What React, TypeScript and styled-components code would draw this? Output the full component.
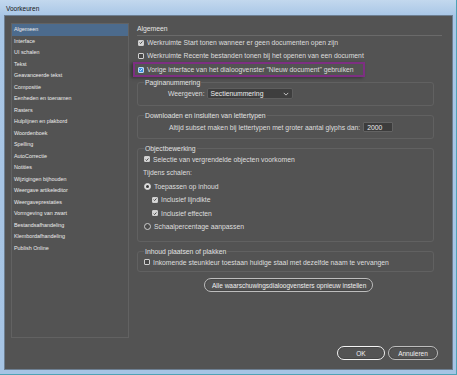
import React from "react";
import styled, { createGlobalStyle, css } from "styled-components";

const GlobalStyle = createGlobalStyle`
  html, body {
    margin: 0;
    padding: 0;
    background: #a9c7e7;
  }
  * {
    box-sizing: border-box;
  }
`;

const Window = styled.div`
  width: 457px;
  height: 375px;
  display: flex;
  flex-direction: column;
  background: linear-gradient(180deg, #c3d8ee 0px, #a8c6e6 16px, #a6c4e4 100%);
  border-right: 1px solid #4fa2b6;
  border-bottom: 1px solid #4fa2b6;
  font-family: "Liberation Sans", Arial, sans-serif;
`;

const TitleBar = styled.div`
  height: 16px;
  flex: none;
  display: flex;
  align-items: center;
  padding: 1px 0 0 6px;
  font-size: 6.5px;
  color: #151515;
`;

const Client = styled.div`
  flex: 1;
  margin: 0 4px 5px 5px;
  background: #535353;
  box-shadow: 0 0 0 1px #6d7f92;
  display: flex;
  flex-direction: column;
  padding: 7px 10px 9px 6px;
  color: #dedede;
`;

const Body = styled.div`
  height: 315px;
  display: flex;
  gap: 8px;
`;

const Sidebar = styled.ul`
  width: 118px;
  flex: none;
  margin: 0;
  padding: 0;
  list-style: none;
  border: 1px solid #626262;
  font-size: 5.4px;
`;

const NavItem = styled.li<{ $active?: boolean }>`
  height: 11.53px;
  line-height: 11.53px;
  padding-left: 2px;
  color: #ececec;
  white-space: nowrap;
  ${(p) =>
    p.$active &&
    css`
      background: #4c6b8d;
      height: 11.5px;
    `}
`;

const Main = styled.div`
  flex: 1;
  display: flex;
  flex-direction: column;
  font-size: 6.8px;
`;

const SectionTitle = styled.div`
  height: 13px;
  line-height: 12px;
  border-bottom: 1px solid #6a6a6a;
  color: #e4e4e4;
`;

const CheckRow = styled.div<{ $indent?: number; $highlight?: boolean }>`
  height: 13px;
  display: flex;
  align-items: center;
  gap: 3px;
  padding-left: ${(p) => 1 + (p.$indent ?? 0)}px;
  white-space: nowrap;
  ${(p) =>
    p.$highlight &&
    css`
      height: 15px;
      width: fit-content;
      margin-left: -4px;
      padding: 0 9px 0 3px;
      border: 2px solid #7d2f82;
      box-shadow: -2px 1px 3px rgba(0, 0, 0, 0.35);
    `}
`;

const Box = styled.span<{ $checked?: boolean; $accent?: boolean }>`
  width: 6px;
  height: 6px;
  flex: none;
  display: inline-flex;
  align-items: center;
  justify-content: center;
  border-radius: 1px;
  border: 1px solid #cfcfcf;
  background: ${(p) => (p.$accent ? "#3b8fe0" : p.$checked ? "#d6d6d6" : "#474747")};
  border-color: ${(p) => (p.$accent ? "#bfd8f2" : "#cfcfcf")};
`;

const Radio = styled.span<{ $checked?: boolean }>`
  width: 7px;
  height: 7px;
  flex: none;
  border-radius: 50%;
  display: inline-flex;
  align-items: center;
  justify-content: center;
  border: 1px solid #cdcdcd;
  background: ${(p) => (p.$checked ? "#e6e6e6" : "#4a4a4a")};
  &::after {
    content: "";
    width: 3px;
    height: 3px;
    border-radius: 50%;
    background: ${(p) => (p.$checked ? "#3a3a3a" : "transparent")};
  }
`;

const Group = styled.fieldset<{ $top?: number; $pt?: number; $pb?: number }>`
  margin: ${(p) => p.$top ?? 4.5}px 8px 0 0;
  min-width: 0;
  border: 1px solid #616161;
  border-radius: 3px;
  padding: ${(p) => p.$pt ?? 0}px 5px ${(p) => p.$pb ?? 6}px 5px;
`;

const Legend = styled.legend`
  margin-left: 1px;
  padding: 0 1px;
  height: 9px;
  line-height: 9px;
  color: #e2e2e2;
`;

const FieldRow = styled.div<{ $pl: number }>`
  display: flex;
  align-items: center;
  gap: 2px;
  padding-left: ${(p) => p.$pl}px;
  white-space: nowrap;
`;

const Select = styled.div`
  width: 86px;
  height: 11px;
  display: flex;
  align-items: center;
  justify-content: space-between;
  padding: 0 3px 0 3px;
  background: #3e3e3e;
  border: 1px solid #5e5e5e;
  border-radius: 2px;
  color: #ececec;
`;

const NumberInput = styled.div`
  width: 30px;
  height: 10px;
  margin-left: 1px;
  display: flex;
  align-items: center;
  padding-left: 3px;
  background: #3c3c3c;
  border: 1px solid #636363;
  border-radius: 1px;
  color: #ececec;
`;

const Plain = styled.div`
  height: 13.5px;
  display: flex;
  align-items: center;
  padding-left: 0;
  white-space: nowrap;
`;

const PillButton = styled.button<{ $default?: boolean }>`
  height: 14px;
  padding: 0 7px;
  border-radius: 7px;
  background: #535353;
  color: #f0f0f0;
  font-family: inherit;
  font-size: 6.5px;
  border: ${(p) => (p.$default ? "1.5px solid #f4f4f4" : "1px solid #bdbdbd")};
  box-shadow: inset 0 0 0 1px #474747;
  white-space: nowrap;
`;

const ResetButton = styled(PillButton)`
  align-self: center;
  margin-top: 6px;
  width: 169px;
  margin-left: -2px;
`;

const Footer = styled.div`
  margin-top: 8px;
  display: flex;
  justify-content: flex-end;
  gap: 3px;
  padding-right: 4px;
`;

const FooterButton = styled(PillButton)<{ $w: number }>`
  width: ${(p) => p.$w}px;
`;

const Check = ({ dark }: { dark?: boolean }) => (
  <svg width="5" height="5" viewBox="0 0 10 10">
    <path
      d="M1.5 5.2 L4 7.6 L8.6 2.4"
      fill="none"
      stroke={dark ? "#2e2e2e" : "#ffffff"}
      strokeWidth="2"
    />
  </svg>
);

const CheckBox = ({ checked, accent }: { checked?: boolean; accent?: boolean }) => (
  <Box $checked={checked} $accent={accent}>
    {checked && <Check dark={!accent} />}
  </Box>
);

const navItems = [
  "Algemeen",
  "Interface",
  "UI schalen",
  "Tekst",
  "Geavanceerde tekst",
  "Compositie",
  "Eenheden en toenamen",
  "Rasters",
  "Hulplijnen en plakbord",
  "Woordenboek",
  "Spelling",
  "AutoCorrectie",
  "Notities",
  "Wijzigingen bijhouden",
  "Weergave artikeleditor",
  "Weergaveprestaties",
  "Vormgeving van zwart",
  "Bestandsafhandeling",
  "Klembordafhandeling",
  "Publish Online",
];

export default function App() {
  return (
    <>
      <GlobalStyle />
      <Window>
        <TitleBar>Voorkeuren</TitleBar>
        <Client>
          <Body>
            <Sidebar>
              {navItems.map((item, i) => (
                <NavItem key={item} $active={i === 0}>
                  {item}
                </NavItem>
              ))}
            </Sidebar>
            <Main>
              <SectionTitle>Algemeen</SectionTitle>
              <CheckRow>
                <CheckBox checked />
                Werkruimte Start tonen wanneer er geen documenten open zijn
              </CheckRow>
              <CheckRow>
                <CheckBox />
                Werkruimte Recente bestanden tonen bij het openen van een document
              </CheckRow>
              <CheckRow $highlight>
                <CheckBox checked accent />
                Vorige interface van het dialoogvenster "Nieuw document" gebruiken
              </CheckRow>

              <Group $top={1} $pt={1} $pb={6}>
                <Legend>Paginanummering</Legend>
                <FieldRow $pl={25}>
                  Weergeven:
                  <Select>
                    Sectienummering
                    <svg width="6" height="4" viewBox="0 0 8 5">
                      <path d="M1 1 L4 4 L7 1" fill="none" stroke="#d0d0d0" strokeWidth="1.2" />
                    </svg>
                  </Select>
                </FieldRow>
              </Group>

              <Group $pt={2.5} $pb={6}>
                <Legend>Downloaden en insluiten van lettertypen</Legend>
                <FieldRow $pl={26}>
                  Altijd subset maken bij lettertypen met groter aantal glyphs dan:
                  <NumberInput>2000</NumberInput>
                </FieldRow>
              </Group>

              <Group $pt={0} $pb={7.5}>
                <Legend>Objectbewerking</Legend>
                <CheckRow style={{ height: 13.5 }}>
                  <CheckBox checked />
                  Selectie van vergrendelde objecten voorkomen
                </CheckRow>
                <Plain>Tijdens schalen:</Plain>
                <CheckRow style={{ height: 13.5 }}>
                  <Radio $checked />
                  Toepassen op inhoud
                </CheckRow>
                <CheckRow $indent={8} style={{ height: 13.5 }}>
                  <CheckBox checked />
                  Inclusief lijndikte
                </CheckRow>
                <CheckRow $indent={8} style={{ height: 13.5 }}>
                  <CheckBox checked />
                  Inclusief effecten
                </CheckRow>
                <CheckRow style={{ height: 13.5 }}>
                  <Radio />
                  Schaalpercentage aanpassen
                </CheckRow>
              </Group>

              <Group $pt={0} $pb={2}>
                <Legend>Inhoud plaatsen of plakken</Legend>
                <CheckRow style={{ height: 13.5 }}>
                  <CheckBox />
                  Inkomende steunkleur toestaan huidige staal met dezelfde naam te vervangen
                </CheckRow>
              </Group>

              <ResetButton>Alle waarschuwingsdialoogvensters opnieuw instellen</ResetButton>
            </Main>
          </Body>
          <Footer>
            <FooterButton $default $w={48}>
              OK
            </FooterButton>
            <FooterButton $w={50}>Annuleren</FooterButton>
          </Footer>
        </Client>
      </Window>
    </>
  );
}
